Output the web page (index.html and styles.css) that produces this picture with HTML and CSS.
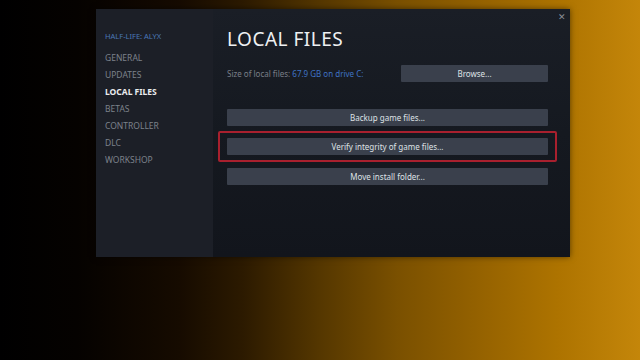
FILE: index.html
```html
<!DOCTYPE html>
<html lang="en">
<head>
    <meta charset="UTF-8">
    <title>Half-Life: Alyx - Properties</title>
    <link rel="stylesheet" href="styles.css">
</head>
<body>

    <div class="dialog">
        <div class="sidebar">
            <div class="game-title">HALF-LIFE: ALYX</div>
            <div class="nav-item">GENERAL</div>
            <div class="nav-item">UPDATES</div>
            <div class="nav-item active">LOCAL FILES</div>
            <div class="nav-item">BETAS</div>
            <div class="nav-item">CONTROLLER</div>
            <div class="nav-item">DLC</div>
            <div class="nav-item">WORKSHOP</div>
        </div>

        <div class="main">
            <span class="close">&#x2715;</span>
            <h1>LOCAL FILES</h1>

            <div class="size-row">
                <p>Size of local files: <span class="size">67.9 GB on drive C:</span></p>
                <button class="btn browse">Browse...</button>
            </div>

            <div class="actions">
                <button class="btn">Backup game files...</button>
                <div class="highlight">
                    <button class="btn">Verify integrity of game files...</button>
                </div>
                <button class="btn">Move install folder...</button>
            </div>
        </div>
    </div>

</body>
</html>
```

FILE: styles.css
```css
body {
    margin: 0;
    width: 640px;
    height: 360px;
    padding: 9px 0 0 96px;
    box-sizing: border-box;
    font-family: "Noto Sans", "Open Sans", sans-serif;
    background: linear-gradient(90deg, #000 0%, #050200 12%, #160b00 28%, #2c1a00 38%, #553700 50%, #7a5000 62%, #956200 75%, #ad7300 87%, #c4860a 100%);
}
.dialog {
    display: flex;
    width: 474px;
    height: 248px;
    box-shadow: 0 0 6px rgba(0, 0, 0, 0.5);
}
.sidebar {
    width: 117px;
    padding: 23px 0 0 9px;
    box-sizing: border-box;
    background: #1c1f27;
}
.game-title {
    color: #4a78b8;
    font-size: 7.5px;
    height: 9px;
    line-height: 9px;
    margin-bottom: 8px;
}
.nav-item {
    color: #7d828b;
    font-size: 8.5px;
    height: 17px;
    line-height: 17px;
}
.nav-item.active {
    color: #e9ebee;
    font-weight: bold;
}
.main {
    position: relative;
    flex: 1;
    padding: 0 22px 0 14px;
    background: linear-gradient(180deg, #1a1e26 0%, #151920 50%, #12151c 100%);
}
.close {
    position: absolute;
    top: 1px;
    right: 4px;
    color: #8a8f97;
    font-size: 9px;
}
h1 {
    margin: 17px 0 0;
    color: #eef0f2;
    font-size: 19px;
    font-weight: normal;
    letter-spacing: 0.5px;
    line-height: 26px;
}
.size-row {
    display: flex;
    align-items: center;
    justify-content: space-between;
    margin-top: 13px;
}
.size-row p {
    margin: 0;
    color: #7a7f88;
    font-size: 8px;
}
.size {
    color: #3f73c4;
}
.btn {
    display: block;
    width: 100%;
    height: 17px;
    padding: 0;
    border: none;
    border-radius: 1px;
    background: #3a404c;
    color: #dfe2e6;
    font-family: inherit;
    font-size: 8px;
}
.browse {
    width: 147px;
}
.actions {
    margin-top: 27px;
}
.highlight {
    margin: 5px -9px 6px;
    padding: 5px 7px;
    border: 2px solid #a8202e;
    border-radius: 2px;
}
```
